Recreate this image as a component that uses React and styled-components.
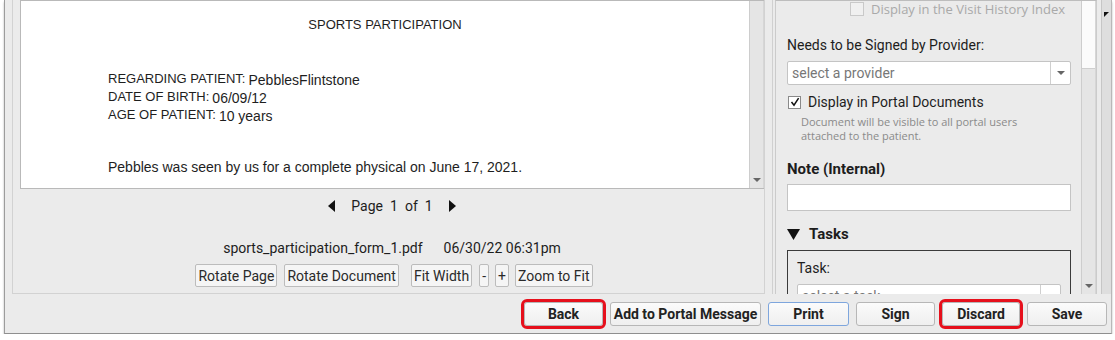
import React from 'react';
import styled, { createGlobalStyle } from 'styled-components';

const GlobalStyle = createGlobalStyle`
  html, body {
    margin: 0;
    padding: 0;
    background: #ffffff;
  }
  body {
    font-family: Roboto, "Liberation Sans", Arial, sans-serif;
    color: #1d1d1d;
  }
`;

const Window = styled.div`
  margin-left: 4px;
  width: 1106px;
  height: 333px;
  background: #ebebeb;
  border-left: 1px solid #9c9c9c;
  border-right: 1px solid #b8b8b8;
  border-bottom: 1px solid #8f8f8f;
  box-shadow: 0 2px 2px rgba(0, 0, 0, 0.28);
  display: flex;
  flex-direction: column;
`;

const Main = styled.div`
  display: flex;
  height: 294px;
  flex-shrink: 0;
  padding-left: 7px;
`;

const LeftPanel = styled.div`
  width: 744px;
  padding-left: 7px;
  border-left: 1px solid #d2d2d2;
  border-right: 1px solid #d2d2d2;
  border-bottom: 1px solid #d2d2d2;
  display: flex;
  flex-direction: column;
`;

const Viewer = styled.div`
  height: 187px;
  flex-shrink: 0;
  display: flex;
  border: 1px solid #b9b9b9;
  border-right: none;
  background: #fff;
`;

const Page = styled.div`
  flex: 1;
  padding: 16px 0 0 87px;
  font-family: "Liberation Sans", Arial, sans-serif;
  color: #1e1e1e;
`;

const DocTitle = styled.div`
  font-size: 13px;
  line-height: 16px;
  text-align: center;
  margin-left: -87px;
`;

const Fields = styled.div`
  margin-top: 36px;
`;

const FieldRow = styled.div`
  height: 18px;
  line-height: 18px;
  white-space: nowrap;
`;

const FieldLabel = styled.span`
  font-size: 13px;
`;

const FieldValue = styled.span`
  font-size: 14px;
  margin-left: 3px;
  vertical-align: -2px;
`;

const BodyText = styled.div`
  margin-top: 35px;
  font-size: 14px;
  line-height: 18px;
`;

const VScroll = styled.div`
  width: 13px;
  flex-shrink: 0;
  background: #e5e5e5;
  border-left: 1px solid #cdcdcd;
  border-right: 1px solid #d6d6d6;
  display: flex;
  flex-direction: column;
  justify-content: ${p => (p.$withThumb ? 'space-between' : 'flex-end')};
  align-items: center;
`;

const Thumb = styled.div`
  width: 100%;
  height: 68px;
  background: #fbfbfb;
  border-bottom: 1px solid #cfcfcf;
  box-sizing: border-box;
`;

const ScrollArrow = styled.svg`
  margin-bottom: 6px;
`;

const Pager = styled.div`
  margin-top: 7px;
  height: 20px;
  display: flex;
  justify-content: center;
  align-items: center;
  font-size: 14px;
  gap: 7px;
`;

const PagerArrow = styled.svg`
  margin: ${p => (p.$left ? '0 9px 0 0' : '0 0 0 9px')};
`;

const FileLine = styled.div`
  margin-top: 23px;
  display: flex;
  justify-content: center;
  gap: 21px;
  font-size: 14px;
  line-height: 18px;
`;

const ToolRow = styled.div`
  margin-top: 7px;
  display: flex;
  justify-content: center;
  padding-left: 4px;
`;

const ToolButton = styled.button`
  height: 23px;
  padding: 0 2px;
  margin-left: ${p => p.$gap || 0}px;
  border: 1px solid #bcbcbc;
  border-radius: 2px;
  background: #f5f5f5;
  font-family: Roboto, sans-serif;
  font-size: 14px;
  color: #2a2a2a;
`;

const Splitter = styled.div`
  width: 7px;
  border-right: 1px solid #d0d0d0;
  margin-right: 2px;
`;

const RightPanel = styled.div`
  width: 320px;
  display: flex;
  border-left: 1px solid #cbcbcb;
  border-top: 1px solid #bdbdbd;
  border-right: 1px solid #cbcbcb;
  overflow: hidden;
`;

const Form = styled.div`
  width: 286px;
  padding: 0 10px 0 11px;
  display: flex;
  flex-direction: column;

  & > * {
    flex-shrink: 0;
  }
`;

const CheckRow = styled.label`
  display: flex;
  align-items: center;
  gap: 7px;
  padding-left: ${p => p.$indent || 1}px;
  margin-top: ${p => p.$top || 0}px;
  height: 16px;
  font-family: ${p => (p.$disabled ? '"Open Sans", sans-serif' : 'Roboto, sans-serif')};
  font-size: ${p => (p.$disabled ? 13 : 14)}px;
  color: ${p => (p.$disabled ? '#a9a9a9' : '#1e1e1e')};
`;

const Box = styled.span`
  width: ${p => (p.$disabled ? 12 : 11)}px;
  height: ${p => (p.$disabled ? 12 : 11)}px;
  border: 1px solid ${p => (p.$disabled ? '#c9c9c9' : '#8a8a8a')};
  background: ${p => (p.$disabled ? '#f0f0f0' : '#fff')};
  display: flex;
  align-items: center;
  justify-content: center;
`;

const Label = styled.div`
  margin-top: ${p => p.$top}px;
  font-size: ${p => (p.$bold ? 15 : 14)}px;
  font-weight: ${p => (p.$bold ? 700 : 400)};
  line-height: 16px;
  display: flex;
  align-items: center;
  gap: 9px;
`;

const Select = styled.div`
  margin-top: ${p => p.$top}px;
  height: 22px;
  border: 1px solid #c4c4c4;
  border-radius: 2px;
  background: #fff;
  display: flex;
  align-items: center;
`;

const SelectText = styled.span`
  flex: 1;
  padding-left: 4px;
  font-size: 14px;
  color: #777;
`;

const SelectButton = styled.span`
  width: 19px;
  height: 100%;
  border-left: 1px solid #cfcfcf;
  display: flex;
  align-items: center;
  justify-content: center;
`;

const HelpText = styled.div`
  margin-top: 5px;
  padding-left: 14px;
  font-family: "Open Sans", sans-serif;
  font-size: 11px;
  line-height: 14px;
  color: #8a8a8a;
`;

const TextInput = styled.div`
  margin-top: 7px;
  height: 25px;
  border: 1px solid #c4c4c4;
  background: #fff;
`;

const TaskBox = styled.div`
  margin-top: 8px;
  height: 80px;
  border: 1px solid #3a3a3a;
  padding: 9px 9px 0 9px;
`;

const RightStrip = styled.div`
  width: 4px;
  margin-left: 4px;
  flex: 1;
  background: #dedede;
  border-left: 1px solid #c6c6c6;
  padding: 2px 0 0 2px;
`;

const BottomBar = styled.div`
  flex: 1;
  display: flex;
  justify-content: flex-end;
  align-items: flex-start;
  gap: 7px;
  padding: 8px 4px 0 0;
`;

const ActionButton = styled.button`
  width: ${p => p.$w}px;
  height: 24px;
  padding: 0;
  border: 1px solid ${p => (p.$focused ? '#7ea6dd' : '#b7b7b7')};
  border-radius: 3px;
  background: linear-gradient(#fbfbfb, #efefef);
  font-family: Roboto, sans-serif;
  font-size: 14px;
  font-weight: 700;
  color: #222;
  white-space: nowrap;
  outline: ${p => (p.$highlight ? '3px solid #e6101c' : 'none')};
  outline-offset: 0;
`;

const DownArrow = ({ color = '#666' }) => (
  <svg width="8" height="4" viewBox="0 0 8 4">
    <polygon points="0,0 8,0 4,4" fill={color} />
  </svg>
);

const Check = () => (
  <svg width="10" height="10" viewBox="0 0 10 10">
    <path d="M1.5 5 L4 8.2 L8.6 1.2" fill="none" stroke="#111" strokeWidth="1.5" />
  </svg>
);

export default function App() {
  return (
    <>
      <GlobalStyle />
      <Window>
        <Main>
          <LeftPanel>
            <Viewer>
              <Page>
                <DocTitle>SPORTS PARTICIPATION</DocTitle>
                <Fields>
                  <FieldRow>
                    <FieldLabel>REGARDING PATIENT:</FieldLabel>
                    <FieldValue>PebblesFlintstone</FieldValue>
                  </FieldRow>
                  <FieldRow>
                    <FieldLabel>DATE OF BIRTH:</FieldLabel>
                    <FieldValue>06/09/12</FieldValue>
                  </FieldRow>
                  <FieldRow>
                    <FieldLabel>AGE OF PATIENT:</FieldLabel>
                    <FieldValue>10 years</FieldValue>
                  </FieldRow>
                </Fields>
                <BodyText>Pebbles was seen by us for a complete physical on June 17, 2021.</BodyText>
              </Page>
              <VScroll>
                <ScrollArrow width="8" height="4" viewBox="0 0 8 4">
                  <polygon points="0,0 8,0 4,4" fill="#666" />
                </ScrollArrow>
              </VScroll>
            </Viewer>

            <Pager>
              <PagerArrow $left width="7" height="12" viewBox="0 0 7 12">
                <polygon points="7,0 7,12 0,6" fill="#111" />
              </PagerArrow>
              <span>Page</span>
              <span>1</span>
              <span>of</span>
              <span>1</span>
              <PagerArrow width="7" height="12" viewBox="0 0 7 12">
                <polygon points="0,0 0,12 7,6" fill="#111" />
              </PagerArrow>
            </Pager>

            <FileLine>
              <span>sports_participation_form_1.pdf</span>
              <span>06/30/22 06:31pm</span>
            </FileLine>

            <ToolRow>
              <ToolButton>Rotate Page</ToolButton>
              <ToolButton $gap={7}>Rotate Document</ToolButton>
              <ToolButton $gap={12}>Fit Width</ToolButton>
              <ToolButton $gap={7}>-</ToolButton>
              <ToolButton $gap={6}>+</ToolButton>
              <ToolButton $gap={6}>Zoom to Fit</ToolButton>
            </ToolRow>
          </LeftPanel>

          <Splitter />

          <RightPanel>
            <Form>
              <CheckRow $disabled $indent={63} $top={0}>
                <Box $disabled />
                Display in the Visit History Index
              </CheckRow>

              <Label $top={20}>Needs to be Signed by Provider:</Label>
              <Select $top={8}>
                <SelectText>select a provider</SelectText>
                <SelectButton>
                  <DownArrow />
                </SelectButton>
              </Select>

              <CheckRow $top={9}>
                <Box>
                  <Check />
                </Box>
                Display in Portal Documents
              </CheckRow>
              <HelpText>
                Document will be visible to all portal users
                <br />
                attached to the patient.
              </HelpText>

              <Label $bold $top={18}>Note (Internal)</Label>
              <TextInput />

              <Label $bold $top={15}>
                <svg width="13" height="11" viewBox="0 0 13 11">
                  <polygon points="0,0 13,0 6.5,11" fill="#111" />
                </svg>
                Tasks
              </Label>
              <TaskBox>
                <Label $top={0}>Task:</Label>
                <Select $top={8}>
                  <SelectText>select a task</SelectText>
                  <SelectButton>
                    <DownArrow />
                  </SelectButton>
                </Select>
              </TaskBox>
            </Form>
            <VScroll $withThumb>
              <Thumb />
              <ScrollArrow width="8" height="4" viewBox="0 0 8 4">
                <polygon points="0,0 8,0 4,4" fill="#666" />
              </ScrollArrow>
            </VScroll>
          </RightPanel>

          <RightStrip>
            <svg width="5" height="5" viewBox="0 0 5 5">
              <polygon points="0,0 5,0 0,5" fill="#111" />
            </svg>
          </RightStrip>
        </Main>

        <BottomBar>
          <ActionButton $w={79} $highlight>Back</ActionButton>
          <ActionButton $w={151}>Add to Portal Message</ActionButton>
          <ActionButton $w={81} $focused>Print</ActionButton>
          <ActionButton $w={79}>Sign</ActionButton>
          <ActionButton $w={78} $highlight>Discard</ActionButton>
          <ActionButton $w={80}>Save</ActionButton>
        </BottomBar>
      </Window>
    </>
  );
}
